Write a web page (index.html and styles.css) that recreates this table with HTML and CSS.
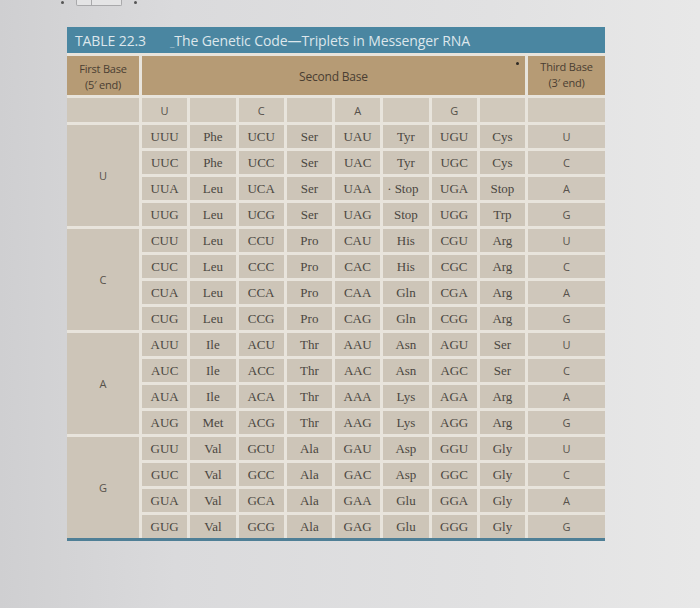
FILE: index.html
```html
<!DOCTYPE html>
<html>
<head>
<meta charset="utf-8">
<link rel="stylesheet" href="styles.css">
</head>
<body>
<div class="page">
  <div class="topstrip">
    <span class="speck"></span>
    <span class="tab"><span class="tabpart"></span><span class="tabpart wide"></span></span>
    <span class="speck"></span>
  </div>
  <div class="code">
    <div class="title"><span class="tnum">TABLE 22.3</span><span class="tname"><span class="mark">_</span>The Genetic Code—Triplets in Messenger RNA</span></div>
    <div class="hd fb">First Base<br>(5′ end)</div>
    <div class="hd sb">Second Base<span class="dot"></span></div>
    <div class="hd tb">Third Base<br>(3′ end)</div>

    <div class="sub first"></div>
    <div class="sub">U</div><div class="sub"></div>
    <div class="sub">C</div><div class="sub"></div>
    <div class="sub">A</div><div class="sub"></div>
    <div class="sub">G</div><div class="sub"></div>
    <div class="sub third"></div>

    <div class="base">U</div>
    <div class="c">UUU</div><div class="c">Phe</div><div class="c">UCU</div><div class="c">Ser</div><div class="c">UAU</div><div class="c">Tyr</div><div class="c">UGU</div><div class="c">Cys</div><div class="t">U</div>
    <div class="c">UUC</div><div class="c">Phe</div><div class="c">UCC</div><div class="c">Ser</div><div class="c">UAC</div><div class="c">Tyr</div><div class="c">UGC</div><div class="c">Cys</div><div class="t">C</div>
    <div class="c">UUA</div><div class="c">Leu</div><div class="c">UCA</div><div class="c">Ser</div><div class="c">UAA</div><div class="c"><span class="pt">·</span>Stop</div><div class="c">UGA</div><div class="c">Stop</div><div class="t">A</div>
    <div class="c">UUG</div><div class="c">Leu</div><div class="c">UCG</div><div class="c">Ser</div><div class="c">UAG</div><div class="c">Stop</div><div class="c">UGG</div><div class="c">Trp</div><div class="t">G</div>

    <div class="base">C</div>
    <div class="c">CUU</div><div class="c">Leu</div><div class="c">CCU</div><div class="c">Pro</div><div class="c">CAU</div><div class="c">His</div><div class="c">CGU</div><div class="c">Arg</div><div class="t">U</div>
    <div class="c">CUC</div><div class="c">Leu</div><div class="c">CCC</div><div class="c">Pro</div><div class="c">CAC</div><div class="c">His</div><div class="c">CGC</div><div class="c">Arg</div><div class="t">C</div>
    <div class="c">CUA</div><div class="c">Leu</div><div class="c">CCA</div><div class="c">Pro</div><div class="c">CAA</div><div class="c">Gln</div><div class="c">CGA</div><div class="c">Arg</div><div class="t">A</div>
    <div class="c">CUG</div><div class="c">Leu</div><div class="c">CCG</div><div class="c">Pro</div><div class="c">CAG</div><div class="c">Gln</div><div class="c">CGG</div><div class="c">Arg</div><div class="t">G</div>

    <div class="base">A</div>
    <div class="c">AUU</div><div class="c">Ile</div><div class="c">ACU</div><div class="c">Thr</div><div class="c">AAU</div><div class="c">Asn</div><div class="c">AGU</div><div class="c">Ser</div><div class="t">U</div>
    <div class="c">AUC</div><div class="c">Ile</div><div class="c">ACC</div><div class="c">Thr</div><div class="c">AAC</div><div class="c">Asn</div><div class="c">AGC</div><div class="c">Ser</div><div class="t">C</div>
    <div class="c">AUA</div><div class="c">Ile</div><div class="c">ACA</div><div class="c">Thr</div><div class="c">AAA</div><div class="c">Lys</div><div class="c">AGA</div><div class="c">Arg</div><div class="t">A</div>
    <div class="c">AUG</div><div class="c">Met</div><div class="c">ACG</div><div class="c">Thr</div><div class="c">AAG</div><div class="c">Lys</div><div class="c">AGG</div><div class="c">Arg</div><div class="t">G</div>

    <div class="base">G</div>
    <div class="c">GUU</div><div class="c">Val</div><div class="c">GCU</div><div class="c">Ala</div><div class="c">GAU</div><div class="c">Asp</div><div class="c">GGU</div><div class="c">Gly</div><div class="t">U</div>
    <div class="c">GUC</div><div class="c">Val</div><div class="c">GCC</div><div class="c">Ala</div><div class="c">GAC</div><div class="c">Asp</div><div class="c">GGC</div><div class="c">Gly</div><div class="t">C</div>
    <div class="c">GUA</div><div class="c">Val</div><div class="c">GCA</div><div class="c">Ala</div><div class="c">GAA</div><div class="c">Glu</div><div class="c">GGA</div><div class="c">Gly</div><div class="t">A</div>
    <div class="c">GUG</div><div class="c">Val</div><div class="c">GCG</div><div class="c">Ala</div><div class="c">GAG</div><div class="c">Glu</div><div class="c">GGG</div><div class="c">Gly</div><div class="t">G</div>
  </div>
</div>
</body>
</html>
```

FILE: styles.css
```css
html, body {
  margin: 0;
  padding: 0;
}
body {
  width: 700px;
  height: 608px;
  overflow: hidden;
  background: linear-gradient(90deg, #cfcfd1 0%, #dadadc 25%, #e1e1e2 70%, #e8e8e8 100%);
}
.page {
  padding-left: 67px;
}
.topstrip {
  height: 27px;
  display: flex;
  align-items: flex-start;
  gap: 12px;
  margin-left: -6px;
}
.speck {
  width: 3px;
  height: 3px;
  border-radius: 50%;
  background: #555;
  margin-top: 1px;
}
.tab {
  display: flex;
  height: 6px;
  margin-top: -1px;
  border: 1px solid #a9a9ab;
  border-top: none;
  border-radius: 0 0 2px 2px;
  background: #e4e4e5;
}
.tabpart {
  width: 14px;
  border-right: 1px solid #a9a9ab;
}
.tabpart.wide {
  width: 29px;
  border-right: none;
}
.code {
  width: 538px;
  display: grid;
  grid-template-columns: 72px repeat(8, 1fr) 77px;
  grid-template-rows: 26px 39px 24px repeat(16, 23px);
  gap: 3px;
  background: #e8e4dc;
  border-bottom: 3px solid #4f7f96;
  font-family: "Open Sans", "Liberation Sans", sans-serif;
}
.title {
  grid-column: 1 / -1;
  background: #4a86a1;
  color: #dde7ec;
  display: flex;
  align-items: center;
  font-size: 14px;
  padding-left: 8px;
  letter-spacing: -0.1px;
}
.tnum {
  width: 95px;
}
.mark {
  font-size: 10px;
  opacity: 0.55;
  margin-right: 0;
}
.hd {
  background: #b69b75;
  color: #4a3e32;
  font-size: 11px;
  line-height: 16px;
  display: flex;
  align-items: center;
  justify-content: center;
  text-align: center;
  letter-spacing: -0.2px;
}
.hd.fb {
  align-items: flex-start;
  padding-top: 5px;
}
.hd.sb {
  grid-column: span 8;
  font-size: 12px;
  position: relative;
  padding-top: 2px;
}
.hd.tb {
  align-items: flex-start;
  padding-top: 3px;
}
.dot {
  position: absolute;
  right: 6px;
  top: 6px;
  width: 3px;
  height: 3px;
  border-radius: 50%;
  background: #2e2a25;
}
.sub {
  background: #d1c9bc;
  color: #55504a;
  font-size: 11px;
  display: flex;
  align-items: center;
  justify-content: center;
}
.sub.first {
  background: #cfc7ba;
}
.base {
  grid-row: span 4;
  background: #cdc5b8;
  color: #57524b;
  font-size: 11px;
  display: flex;
  align-items: center;
  justify-content: center;
}
.c {
  background: #cdc5b8;
  color: #4b4741;
  font-family: "Liberation Serif", "DejaVu Serif", serif;
  font-size: 13px;
  display: flex;
  align-items: center;
  justify-content: center;
}
.pt {
  margin-right: 3px;
  margin-left: -6px;
}
.t {
  background: #cfc7bb;
  color: #57524b;
  font-size: 11px;
  display: flex;
  align-items: center;
  justify-content: center;
}
```
